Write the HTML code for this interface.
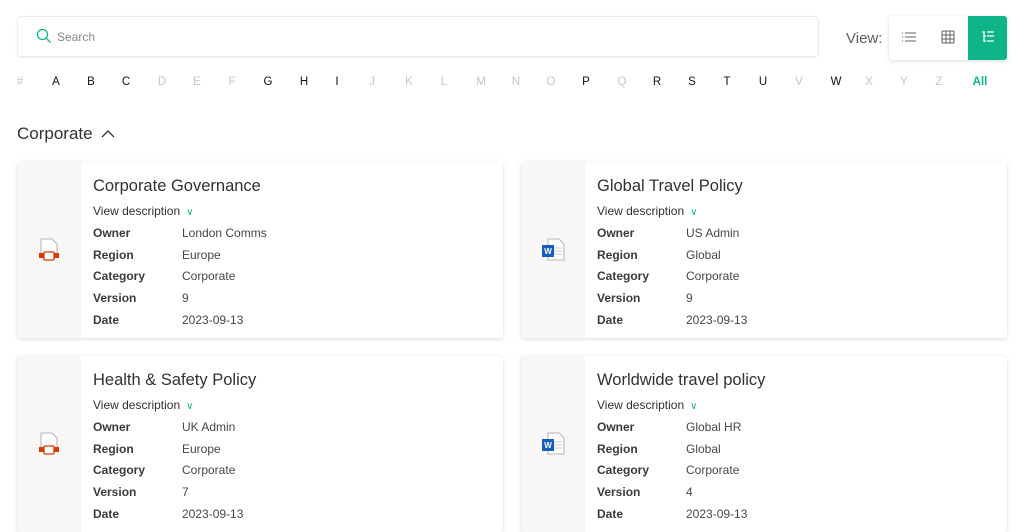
<!DOCTYPE html><html><head><style>
*{box-sizing:border-box;margin:0;padding:0}
body{width:1024px;height:513px;overflow:hidden;background:#fff;font-family:"Liberation Sans",sans-serif;color:#323130;position:relative}
.search{position:absolute;left:17px;top:16px;width:802px;height:41px;border:1px solid #edebe9;border-radius:4px;box-shadow:0 1px 2px rgba(0,0,0,.05)}
.search span{position:absolute;left:39px;top:13px;font-size:12px;color:#8a8886}
.view{position:absolute;left:846px;top:30px;font-size:15px;color:#605e5c}
.btns{position:absolute;left:889px;top:16px;width:118px;height:44px;box-shadow:0 1px 4px rgba(0,0,0,.15);border-radius:3px;background:#fff}
.g{position:absolute;right:0;top:0;width:39px;height:44px;background:#10b48a;border-radius:0 3px 3px 0}
.l{position:absolute;top:76px;font-size:11.5px;transform:translateX(-50%);color:#111}
.d{color:#c8c6c4}
.h{position:absolute;left:17px;top:124px;font-size:17px;color:#323130}
.card{position:absolute;width:486px;height:176px;box-shadow:0 1px 4px rgba(0,0,0,.14);border-radius:3px;background:#fff;overflow:hidden}
.ic{position:absolute;left:0;top:0;width:64px;height:100%;background:#f8f7f6}
.ic svg{position:absolute;left:21px;top:76px}
.t{position:absolute;left:76px;top:15px;font-size:16.5px;color:#323130}
.vd{position:absolute;left:76px;top:42px;font-size:12px;color:#323130}
.vd b{font-weight:normal;color:#10b48a;margin-left:6px;font-size:10px}
.r{position:absolute;left:76px;font-size:12px}
.r i{font-style:normal;font-weight:bold;display:inline-block;width:89px;color:#3b3a39}
.r span{color:#484644}
</style></head><body>
<div class="search"><svg style="position:absolute;left:18px;top:11px" width="16" height="16" viewBox="0 0 16 16"><circle cx="6.5" cy="6.5" r="5" fill="none" stroke="#10b48a" stroke-width="1.3"/><path d="M10 10L14.5 14.5" stroke="#10b48a" stroke-width="1.3"/></svg><span>Search</span></div>
<div class="view">View:</div>
<div class="btns">
<svg style="position:absolute;left:12px;top:15px" width="16" height="13" viewBox="0 0 16 13" stroke="#605e5c" stroke-width="1.1"><path d="M1 2h1M1 6h1M1 10h1M4 2h11M4 6h11M4 10h11"/></svg>
<svg style="position:absolute;left:52px;top:14px" width="14" height="14" viewBox="0 0 14 14" stroke="#605e5c" stroke-width="1" fill="none"><rect x="1" y="1" width="12" height="12" rx="1"/><path d="M5 1v12M9 1v12M1 5h12M1 9h12"/></svg>
<div class="g"><svg style="position:absolute;left:13px;top:15px" width="14" height="13" viewBox="0 0 14 13" stroke="#fff" stroke-width="1.3"><path d="M1 1h3M3 1v10M3 5h2M3 10h2M6 1h7M6 5h7M6 10h7"/></svg></div>
</div>
<div class="l d" style="left:20px">#</div><div class="l" style="left:56px">A</div><div class="l" style="left:91px">B</div><div class="l" style="left:126px">C</div><div class="l d" style="left:162px">D</div><div class="l d" style="left:197px">E</div><div class="l d" style="left:232px">F</div><div class="l" style="left:268px">G</div><div class="l" style="left:304px">H</div><div class="l" style="left:337px">I</div><div class="l d" style="left:372px">J</div><div class="l d" style="left:409px">K</div><div class="l d" style="left:444px">L</div><div class="l d" style="left:481px">M</div><div class="l d" style="left:516px">N</div><div class="l d" style="left:551px">O</div><div class="l" style="left:586px">P</div><div class="l d" style="left:622px">Q</div><div class="l" style="left:657px">R</div><div class="l" style="left:692px">S</div><div class="l" style="left:727px">T</div><div class="l" style="left:763px">U</div><div class="l d" style="left:799px">V</div><div class="l" style="left:836px">W</div><div class="l d" style="left:869px">X</div><div class="l d" style="left:904px">Y</div><div class="l d" style="left:939px">Z</div><div class="l" style="left:980px;color:#10b48a;font-weight:bold">All</div>
<div class="h">Corporate <svg width="14" height="10" viewBox="0 0 14 10" style="margin-left:4px"><path d="M1 8l6-6 6 6" fill="none" stroke="#323130" stroke-width="1.3"/></svg></div>
<div class="card" style="left:17px;top:162px"><div class="ic"><svg width="22" height="24" viewBox="0 0 22 24"><path d="M3 1h11l5 5v10H3z" fill="#fff" stroke="#a19f9d" stroke-width=".8"/><rect x="1" y="15" width="20" height="5" fill="#d83b01"/><rect x="6" y="14" width="10" height="8" rx="1" fill="#fff" stroke="#d83b01" stroke-width="1.3"/></svg></div><div class="t">Corporate Governance</div><div class="vd">View description<b>&#8744;</b></div><div class="r" style="top:64px"><i>Owner</i><span>London Comms</span></div><div class="r" style="top:86px"><i>Region</i><span>Europe</span></div><div class="r" style="top:107px"><i>Category</i><span>Corporate</span></div><div class="r" style="top:129px"><i>Version</i><span>9</span></div><div class="r" style="top:151px"><i>Date</i><span>2023-09-13</span></div></div>
<div class="card" style="left:521px;top:162px"><div class="ic"><svg width="24" height="24" viewBox="0 0 24 24"><path d="M6 1h11l5 5v16H6z" fill="#fff" stroke="#a19f9d" stroke-width=".8"/><path d="M12 10h8M12 13h8M12 16h8" stroke="#ccc"/><rect x="0" y="7" width="12" height="12" fill="#185abd"/><text x="6" y="16" font-size="8" fill="#fff" text-anchor="middle" font-family="Liberation Sans" font-weight="bold">W</text></svg></div><div class="t">Global Travel Policy</div><div class="vd">View description<b>&#8744;</b></div><div class="r" style="top:64px"><i>Owner</i><span>US Admin</span></div><div class="r" style="top:86px"><i>Region</i><span>Global</span></div><div class="r" style="top:107px"><i>Category</i><span>Corporate</span></div><div class="r" style="top:129px"><i>Version</i><span>9</span></div><div class="r" style="top:151px"><i>Date</i><span>2023-09-13</span></div></div>
<div class="card" style="left:17px;top:356px"><div class="ic"><svg width="22" height="24" viewBox="0 0 22 24"><path d="M3 1h11l5 5v10H3z" fill="#fff" stroke="#a19f9d" stroke-width=".8"/><rect x="1" y="15" width="20" height="5" fill="#d83b01"/><rect x="6" y="14" width="10" height="8" rx="1" fill="#fff" stroke="#d83b01" stroke-width="1.3"/></svg></div><div class="t">Health &amp; Safety Policy</div><div class="vd">View description<b>&#8744;</b></div><div class="r" style="top:64px"><i>Owner</i><span>UK Admin</span></div><div class="r" style="top:86px"><i>Region</i><span>Europe</span></div><div class="r" style="top:107px"><i>Category</i><span>Corporate</span></div><div class="r" style="top:129px"><i>Version</i><span>7</span></div><div class="r" style="top:151px"><i>Date</i><span>2023-09-13</span></div></div>
<div class="card" style="left:521px;top:356px"><div class="ic"><svg width="24" height="24" viewBox="0 0 24 24"><path d="M6 1h11l5 5v16H6z" fill="#fff" stroke="#a19f9d" stroke-width=".8"/><path d="M12 10h8M12 13h8M12 16h8" stroke="#ccc"/><rect x="0" y="7" width="12" height="12" fill="#185abd"/><text x="6" y="16" font-size="8" fill="#fff" text-anchor="middle" font-family="Liberation Sans" font-weight="bold">W</text></svg></div><div class="t">Worldwide travel policy</div><div class="vd">View description<b>&#8744;</b></div><div class="r" style="top:64px"><i>Owner</i><span>Global HR</span></div><div class="r" style="top:86px"><i>Region</i><span>Global</span></div><div class="r" style="top:107px"><i>Category</i><span>Corporate</span></div><div class="r" style="top:129px"><i>Version</i><span>4</span></div><div class="r" style="top:151px"><i>Date</i><span>2023-09-13</span></div></div>
</body></html>
